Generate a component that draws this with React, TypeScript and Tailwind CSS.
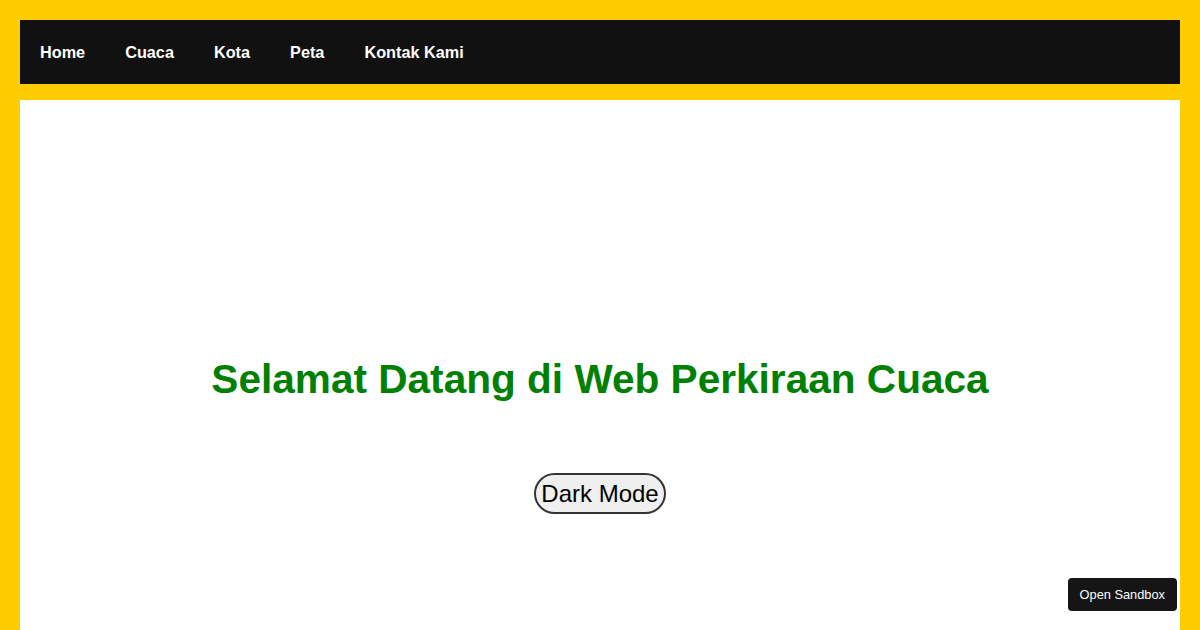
export default function App() {
  const links = ["Home", "Cuaca", "Kota", "Peta", "Kontak Kami"];
  return (
    <div className="relative h-[630px] overflow-hidden bg-[#ffcc00] p-5 font-['Liberation_Sans',Arial,sans-serif]">
      <nav className="flex h-16 items-center bg-[#111111]">
        {links.map((l) => (
          <a key={l} href="#" className="px-5 text-[16.25px] font-bold text-white">
            {l}
          </a>
        ))}
      </nav>
      <main className="mt-4 flex h-[600px] flex-col items-center bg-white pt-[256px]">
        <h1 className="text-[40.6px] leading-[46px] font-bold text-[#008000]">
          Selamat Datang di Web Perkiraan Cuaca
        </h1>
        <button className="mt-[71px] rounded-full border-2 border-[#333] bg-[#efefef] px-[5px] py-[5px] text-2xl leading-[27px] text-black">
          Dark Mode
        </button>
      </main>
      <a
        href="#"
        className="absolute right-[23px] bottom-[19px] flex h-[33px] items-center rounded-[4px] bg-[#151515] px-[12px] text-[12.8px] text-white"
      >
        Open Sandbox
      </a>
    </div>
  );
}
